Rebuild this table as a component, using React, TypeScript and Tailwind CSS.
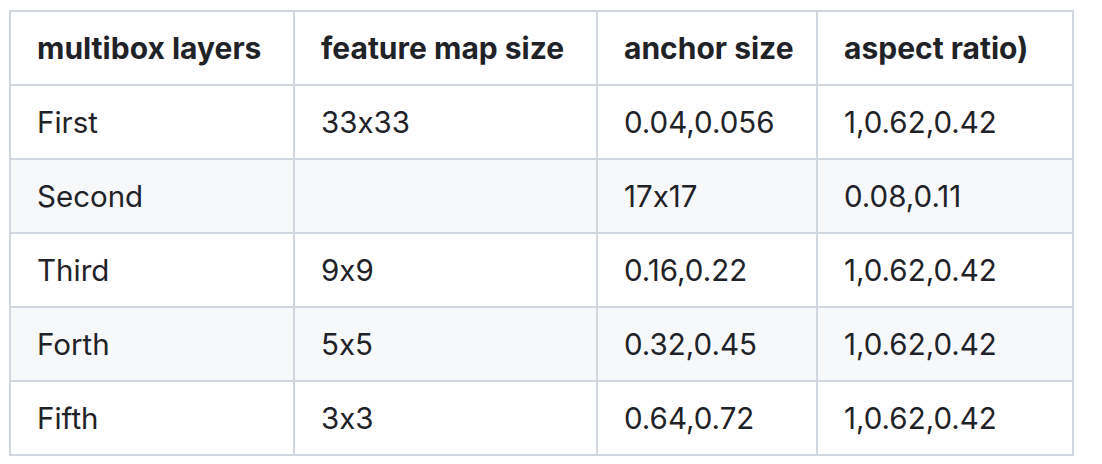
const rows = [
  ["First", "33x33", "0.04,0.056", "1,0.62,0.42"],
  ["Second", "", "17x17", "0.08,0.11"],
  ["Third", "9x9", "0.16,0.22", "1,0.62,0.42"],
  ["Forth", "5x5", "0.32,0.45", "1,0.62,0.42"],
  ["Fifth", "3x3", "0.64,0.72", "1,0.62,0.42"],
];

const headers = ["multibox layers", "feature map size", "anchor size", "aspect ratio)"];
const widths = ["w-[284px]", "w-[303px]", "w-[220px]", "w-[256px]"];

export default function App() {
  return (
    <div className="min-h-screen bg-white pl-[9px] pt-[10px] font-['Inter',sans-serif] text-[#1f2328] [font-feature-settings:'calt'_0]">
      <table className="w-[1064px] table-fixed border-collapse text-[29.5px] leading-[48px]">
        <thead>
          <tr>
            {headers.map((h, i) => (
              <th
                key={h}
                className={`${widths[i]} h-[74px] whitespace-nowrap border-2 border-[#d0d7de] px-[26px] py-[12px] text-left text-[30px] font-bold`}
              >
                {h}
              </th>
            ))}
          </tr>
        </thead>
        <tbody>
          {rows.map((r, ri) => (
            <tr key={r[0]} className={ri % 2 === 1 ? "bg-[#f6f8fa]" : "bg-white"}>
              {r.map((c, ci) => (
                <td key={ci} className="h-[74px] whitespace-nowrap border-2 border-[#d0d7de] px-[26px] py-[12px]">
                  {c}
                </td>
              ))}
            </tr>
          ))}
        </tbody>
      </table>
    </div>
  );
}
